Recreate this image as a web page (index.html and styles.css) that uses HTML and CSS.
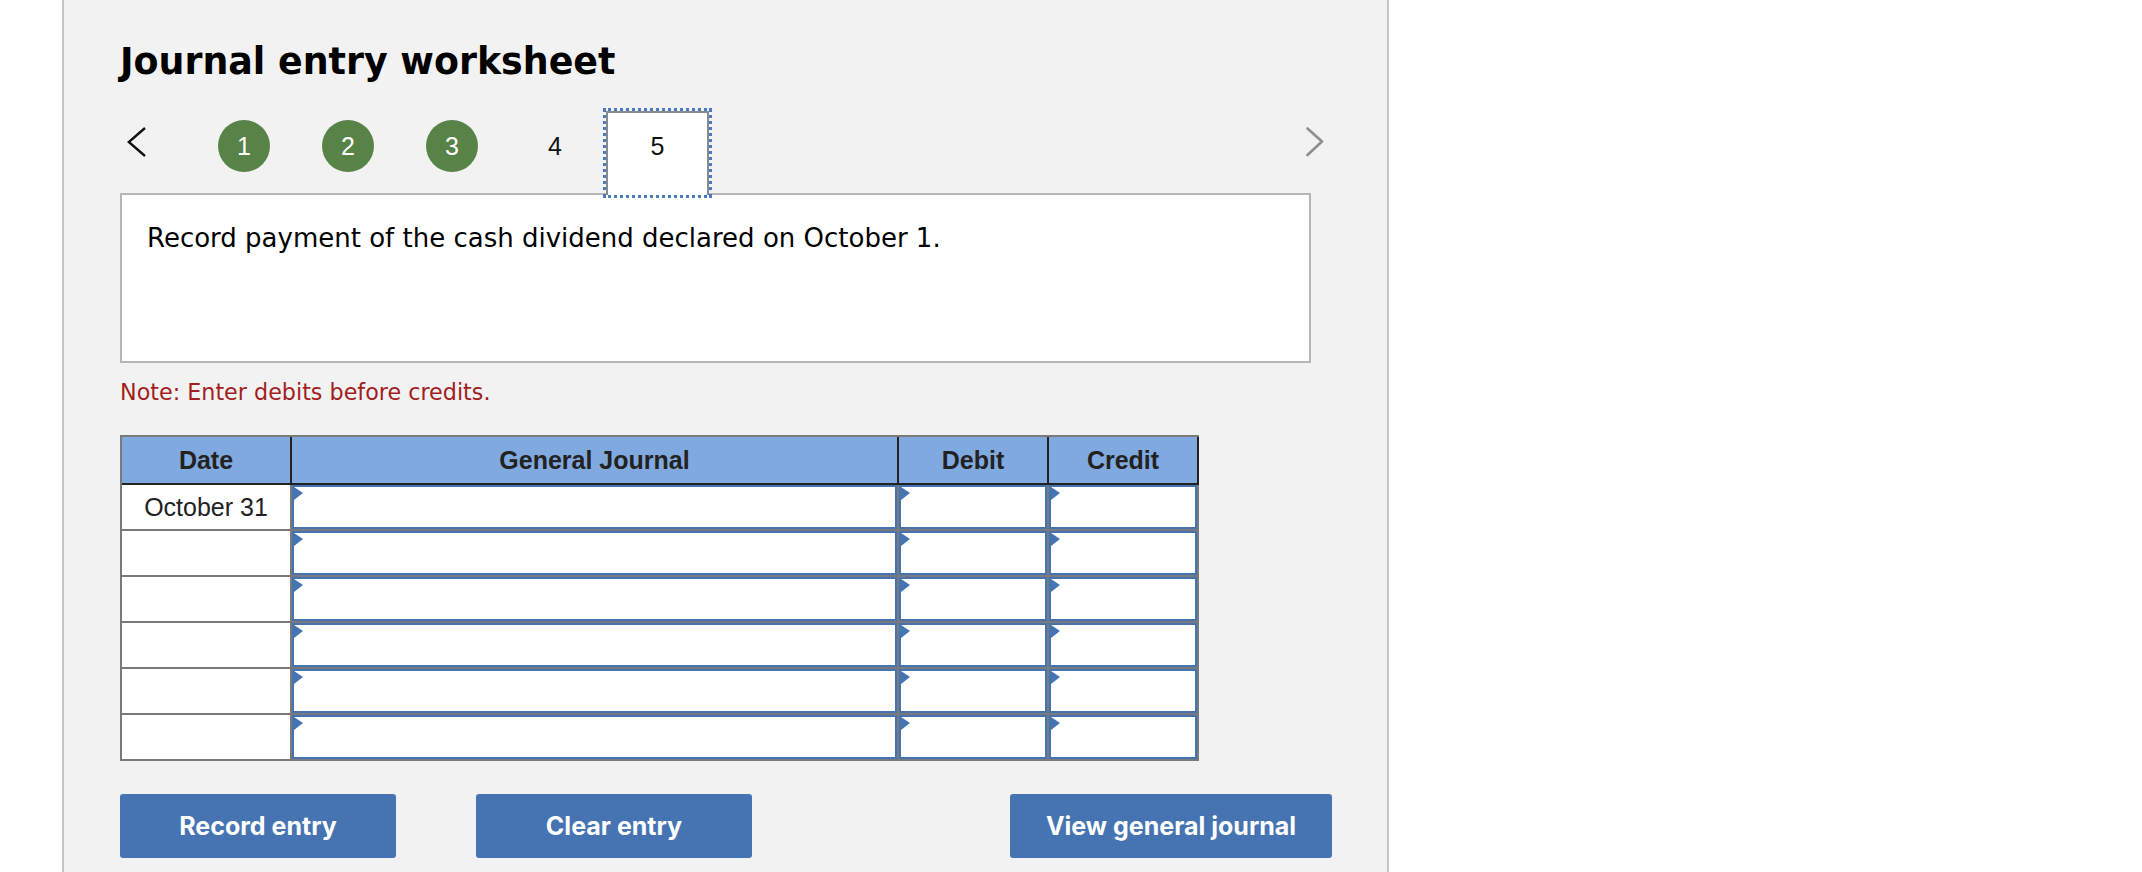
FILE: index.html
```html
<!DOCTYPE html>
<html lang="en">
<head>
<meta charset="utf-8">
<title>Journal entry worksheet</title>
<link rel="stylesheet" href="styles.css">
</head>
<body>
<div class="panel">
  <h1 class="title">Journal entry worksheet</h1>
  <div class="tabs">
    <svg class="nav nav-prev" width="20" height="30" viewBox="0 0 20 30" aria-hidden="true"><polyline points="18,1 1.8,15 18,29" fill="none" stroke="#111" stroke-width="2.4"/></svg>
    <span class="step step-done step-first">1</span>
    <span class="step step-done">2</span>
    <span class="step step-done">3</span>
    <span class="step step-plain">4</span>
    <span class="step-current">5</span>
    <svg class="nav nav-next" width="20" height="30" viewBox="0 0 20 30" aria-hidden="true"><polyline points="2.5,1.5 17,14.5 2.5,28" fill="none" stroke="#8e8e8e" stroke-width="2.6" stroke-linecap="round" stroke-linejoin="round"/></svg>
  </div>
  <div class="question">Record payment of the cash dividend declared on October 1.</div>
  <p class="note">Note: Enter debits before credits.</p>
  <div class="journal">
    <div class="jhead">
      <div class="th">Date</div>
      <div class="th">General Journal</div>
      <div class="th">Debit</div>
      <div class="th">Credit</div>
    </div>
    <div class="jrow"><div class="date">October 31</div><div class="cell"></div><div class="cell"></div><div class="cell"></div></div>
    <div class="jrow"><div class="date"></div><div class="cell"></div><div class="cell"></div><div class="cell"></div></div>
    <div class="jrow"><div class="date"></div><div class="cell"></div><div class="cell"></div><div class="cell"></div></div>
    <div class="jrow"><div class="date"></div><div class="cell"></div><div class="cell"></div><div class="cell"></div></div>
    <div class="jrow"><div class="date"></div><div class="cell"></div><div class="cell"></div><div class="cell"></div></div>
    <div class="jrow"><div class="date"></div><div class="cell"></div><div class="cell"></div><div class="cell"></div></div>
  </div>
  <div class="actions">
    <button class="btn">Record entry</button>
    <button class="btn">Clear entry</button>
    <button class="btn btn-view">View general journal</button>
  </div>
</div>
</body>
</html>
```

FILE: styles.css
```css
html, body {
  margin: 0;
  padding: 0;
  background: #ffffff;
}

body {
  width: 2142px;
  height: 872px;
  overflow: hidden;
}

.panel {
  margin-left: 62px;
  width: 1327px;
  height: 872px;
  box-sizing: border-box;
  border-left: 2px solid #c6c6c6;
  border-right: 2px solid #c6c6c6;
  background: #f2f2f2;
  padding: 42px 0 0 56px;
}

.title {
  margin: 0;
  font-family: "DejaVu Sans", Verdana, sans-serif;
  font-weight: bold;
  font-size: 36.4px;
  line-height: 40px;
  color: #000;
}

.tabs {
  display: flex;
  align-items: flex-start;
  width: 1205px;
  height: 84px;
  margin-top: 29px;
  margin-bottom: -2px;
  position: relative;
  z-index: 1;
}

.nav {
  display: block;
  margin-top: 16px;
}

.nav-prev {
  margin-left: 7px;
}

.nav-next {
  margin-left: auto;
}

.step {
  width: 52px;
  height: 52px;
  margin-top: 9px;
  margin-left: 52px;
  font-family: "Liberation Sans", Arial, sans-serif;
  font-size: 25px;
  line-height: 52px;
  text-align: center;
  color: #111;
}

.step-first {
  margin-left: 71px;
}

.step-done {
  border-radius: 50%;
  background: #588347;
  color: #ffffff;
}

.step-plain {
  margin-left: 51px;
}

.step-current {
  margin-left: 25px;
  width: 99px;
  height: 75px;
  border: 2px solid #8a8a8a;
  border-bottom: 0;
  background: #ffffff;
  outline: 3px dotted #4b7bc2;
  padding-top: 7px;
  box-sizing: content-box;
  font-family: "Liberation Sans", Arial, sans-serif;
  font-size: 25px;
  line-height: 52px;
  text-align: center;
  color: #111;
}

.question {
  width: 1191px;
  height: 170px;
  box-sizing: border-box;
  border: 2px solid #b6b6b6;
  background: #ffffff;
  padding: 28px 25px 0;
  font-family: "DejaVu Sans", Verdana, sans-serif;
  font-size: 26px;
  line-height: 30px;
  color: #000;
}

.note {
  margin: 16px 0 0;
  font-family: "DejaVu Sans", Verdana, sans-serif;
  font-size: 22.25px;
  line-height: 26px;
  color: #a31e1e;
}

.journal {
  margin-top: 30px;
  width: 1079px;
  box-sizing: border-box;
  border: 2px solid #7a7a7a;
  border-right: 0;
  background: #7a7a7a;
  display: flex;
  flex-direction: column;
}

.jhead,
.jrow {
  display: grid;
  grid-template-columns: 168px 605px 148px 148px;
  column-gap: 2px;
}

.jhead {
  background: #222222;
  padding-bottom: 2px;
  border-right: 2px solid #222222;
}

.th {
  height: 46px;
  background: #80aadf;
  display: flex;
  align-items: center;
  justify-content: center;
  font-family: "Liberation Sans", Arial, sans-serif;
  font-weight: bold;
  font-size: 25px;
  color: #222;
}

.jrow {
  height: 44px;
  border-right: 2px solid #7a7a7a;
}

.jrow + .jrow {
  margin-top: 2px;
}

.date {
  background: #ffffff;
  display: flex;
  align-items: center;
  justify-content: center;
  font-family: "Liberation Sans", Arial, sans-serif;
  font-size: 25px;
  color: #222;
}

.cell {
  background: #ffffff;
  border: 2px solid #4574b3;
  position: relative;
}

.cell::before {
  content: "";
  position: absolute;
  left: 0;
  top: 0;
  border-left: 9px solid #4574b3;
  border-top: 6px solid transparent;
  border-bottom: 7px solid transparent;
}

.actions {
  display: flex;
  gap: 80px;
  width: 1212px;
  margin-top: 33px;
}

.btn {
  width: 276px;
  height: 64px;
  border: 0;
  border-radius: 3px;
  background: #4674b2;
  color: #ffffff;
  font-family: Inter, "Liberation Sans", sans-serif;
  font-weight: 700;
  font-size: 25px;
  padding: 0;
  cursor: pointer;
}

.btn-view {
  width: 322px;
  margin-left: auto;
}
```
